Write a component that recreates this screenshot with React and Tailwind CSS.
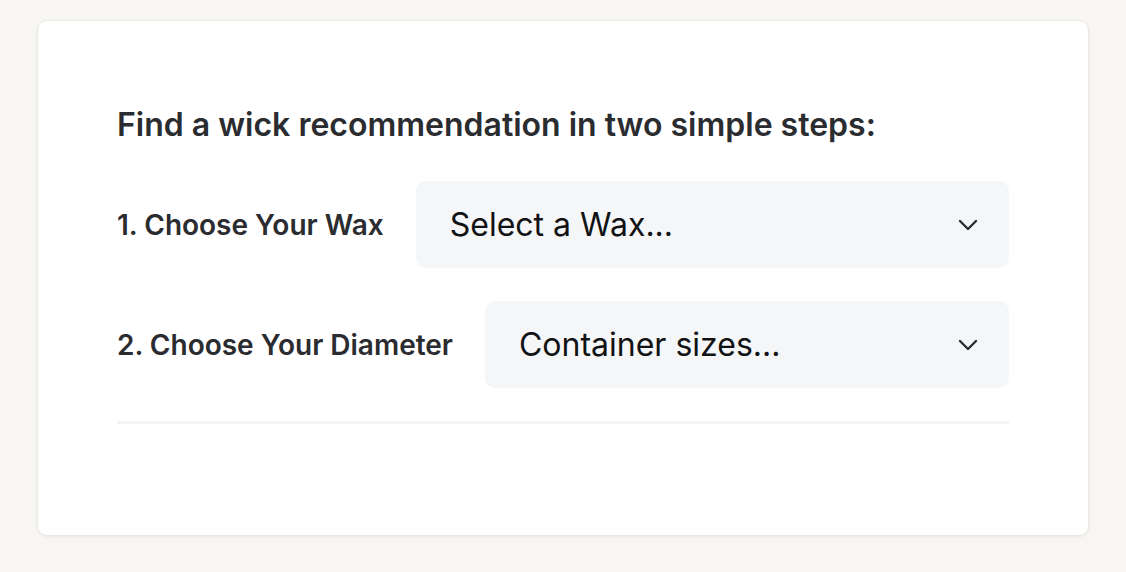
import React from "react";

function Chevron() {
  return (
    <svg width="20" height="12" viewBox="0 0 20 12" fill="none" className="shrink-0">
      <path d="M2 2 L10 10 L18 2" stroke="#2b2d31" strokeWidth="2.4" strokeLinecap="round" strokeLinejoin="round" />
    </svg>
  );
}

function Select({ text }) {
  return (
    <div className="flex-1 h-[87px] rounded-[10px] bg-[#f5f6f7] flex items-center justify-between pl-[34px] pr-[31px]">
      <span className="text-[32px] text-[#111214]">{text}</span>
      <Chevron />
    </div>
  );
}

export default function App() {
  return (
    <div
      className="min-h-[572px] bg-[#f7f6f2] pt-[20px] pl-[37px] pr-[37px]"
      style={{ fontFamily: "Inter, 'Liberation Sans', sans-serif" }}
    >
      <div className="w-[1052px] h-[516px] bg-white rounded-[10px] border border-[#ebe9e4] shadow-[0_1px_3px_rgba(0,0,0,0.06)] px-[79px] pt-[84px]">
        <h2 className="text-[32px] leading-[40px] font-semibold text-[#2a2c30]">
          Find a wick recommendation in two simple steps:
        </h2>
        <div className="mt-[36px] flex flex-col gap-[33px]">
          <div className="flex items-center gap-[32px]">
            <label className="text-[28px] font-semibold text-[#2a2c30] whitespace-nowrap">1. Choose Your Wax</label>
            <Select text="Select a Wax..." />
          </div>
          <div className="flex items-center gap-[32px]">
            <label className="text-[28px] font-semibold text-[#2a2c30] whitespace-nowrap">2. Choose Your Diameter</label>
            <Select text="Container sizes..." />
          </div>
        </div>
        <div className="mt-[33px] h-[3px] bg-[#f3f4f5]" />
      </div>
    </div>
  );
}
